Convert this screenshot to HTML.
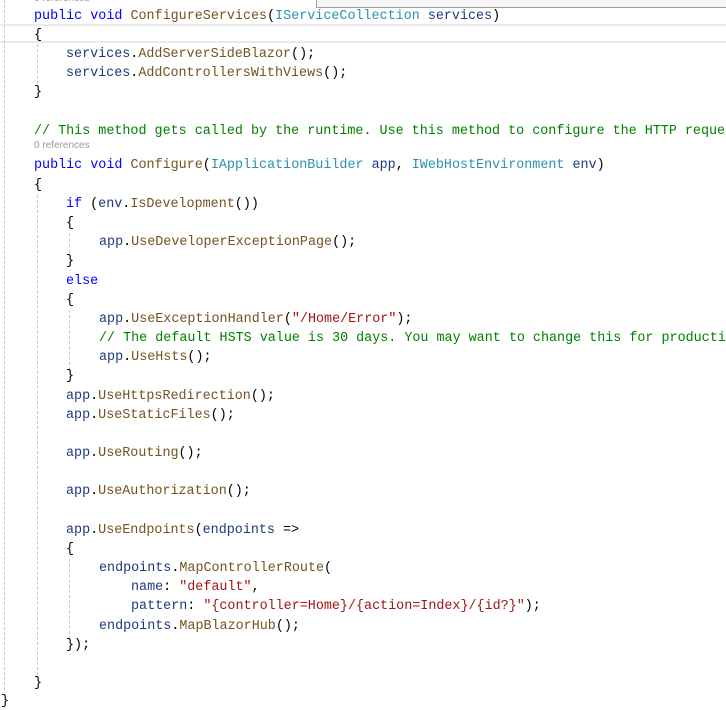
<!DOCTYPE html>
<html><head><meta charset="utf-8"><style>
html,body{margin:0;width:726px;height:710px;overflow:hidden}
body{background:#fff;position:relative;font-family:"Liberation Mono",monospace;font-size:13.4px;color:#000}
#w{position:absolute;left:0;top:0;width:726px;height:710px;overflow:hidden}
#t{position:absolute;left:0;top:3px;width:726px;height:707px}
.l{position:absolute;white-space:pre;line-height:19px;height:19px}
.k{color:#0000ff}.t{color:#2b91af}.c{color:#008000}.s{color:#a31515}.m{color:#74531f}.p{color:#1f377f}
.cl{position:absolute;font-family:"Liberation Sans",sans-serif;font-size:10px;color:#999;left:34px}
.g{position:absolute;width:0;border-left:1px dashed #c8c8c8}
</style></head><body><div id="w">
<div style="position:absolute;left:316px;top:-1px;width:420px;height:7px;background:#f5f5f5;border:1px solid #a0a0a0"></div>
<div style="position:absolute;left:0;top:24px;width:726px;height:15px;border-top:2px solid #eaeaea;border-bottom:2px solid #eaeaea"></div>
<div class="g" style="left:4px;top:0;height:690px"></div>
<div class="g" style="left:37px;top:44px;height:40px"></div>
<div class="g" style="left:37px;top:195px;height:480px"></div>
<div class="g" style="left:69px;top:233px;height:20px"></div>
<div class="g" style="left:69px;top:310px;height:60px"></div>
<div class="g" style="left:69px;top:559px;height:80px"></div>
<div id="t">
<div class="cl" style="top:-10px">0 references</div>
<div class="l" style="left:34px;top:4px"><span class="k">public</span> <span class="k">void</span> <span class="m">ConfigureServices</span>(<span class="t">IServiceCollection</span> <span class="p">services</span>)</div>
<div class="l" style="left:34px;top:23px">{</div>
<div class="l" style="left:66px;top:42px"><span class="p">services</span>.<span class="m">AddServerSideBlazor</span>();</div>
<div class="l" style="left:66px;top:61px"><span class="p">services</span>.<span class="m">AddControllersWithViews</span>();</div>
<div class="l" style="left:34px;top:80px">}</div>
<div class="l c" style="left:34px;top:119px">// This method gets called by the runtime. Use this method to configure the HTTP reque</div>
<div class="cl" style="top:137px">0 references</div>
<div class="l" style="left:34px;top:153px"><span class="k">public</span> <span class="k">void</span> <span class="m">Configure</span>(<span class="t">IApplicationBuilder</span> <span class="p">app</span>, <span class="t">IWebHostEnvironment</span> <span class="p">env</span>)</div>
<div class="l" style="left:34px;top:173px">{</div>
<div class="l" style="left:66px;top:192px"><span class="k">if</span> (<span class="p">env</span>.<span class="m">IsDevelopment</span>())</div>
<div class="l" style="left:66px;top:211px">{</div>
<div class="l" style="left:99px;top:230px"><span class="p">app</span>.<span class="m">UseDeveloperExceptionPage</span>();</div>
<div class="l" style="left:66px;top:249px">}</div>
<div class="l k" style="left:66px;top:269px">else</div>
<div class="l" style="left:66px;top:288px">{</div>
<div class="l" style="left:99px;top:307px"><span class="p">app</span>.<span class="m">UseExceptionHandler</span>(<span class="s">"/Home/Error"</span>);</div>
<div class="l c" style="left:99px;top:326px">// The default HSTS value is 30 days. You may want to change this for producti</div>
<div class="l" style="left:99px;top:345px"><span class="p">app</span>.<span class="m">UseHsts</span>();</div>
<div class="l" style="left:66px;top:364px">}</div>
<div class="l" style="left:66px;top:384px"><span class="p">app</span>.<span class="m">UseHttpsRedirection</span>();</div>
<div class="l" style="left:66px;top:403px"><span class="p">app</span>.<span class="m">UseStaticFiles</span>();</div>
<div class="l" style="left:66px;top:441px"><span class="p">app</span>.<span class="m">UseRouting</span>();</div>
<div class="l" style="left:66px;top:479px"><span class="p">app</span>.<span class="m">UseAuthorization</span>();</div>
<div class="l" style="left:66px;top:518px"><span class="p">app</span>.<span class="m">UseEndpoints</span>(<span class="p">endpoints</span> =&gt;</div>
<div class="l" style="left:66px;top:537px">{</div>
<div class="l" style="left:99px;top:556px"><span class="p">endpoints</span>.<span class="m">MapControllerRoute</span>(</div>
<div class="l" style="left:131px;top:575px"><span class="p">name</span>: <span class="s">"default"</span>,</div>
<div class="l" style="left:131px;top:594px"><span class="p">pattern</span>: <span class="s">"{controller=Home}/{action=Index}/{id?}"</span>);</div>
<div class="l" style="left:99px;top:614px"><span class="p">endpoints</span>.<span class="m">MapBlazorHub</span>();</div>
<div class="l" style="left:66px;top:633px">});</div>
<div class="l" style="left:34px;top:671px">}</div>
<div class="l" style="left:1px;top:689px">}</div>
</div></div>
</body></html>
